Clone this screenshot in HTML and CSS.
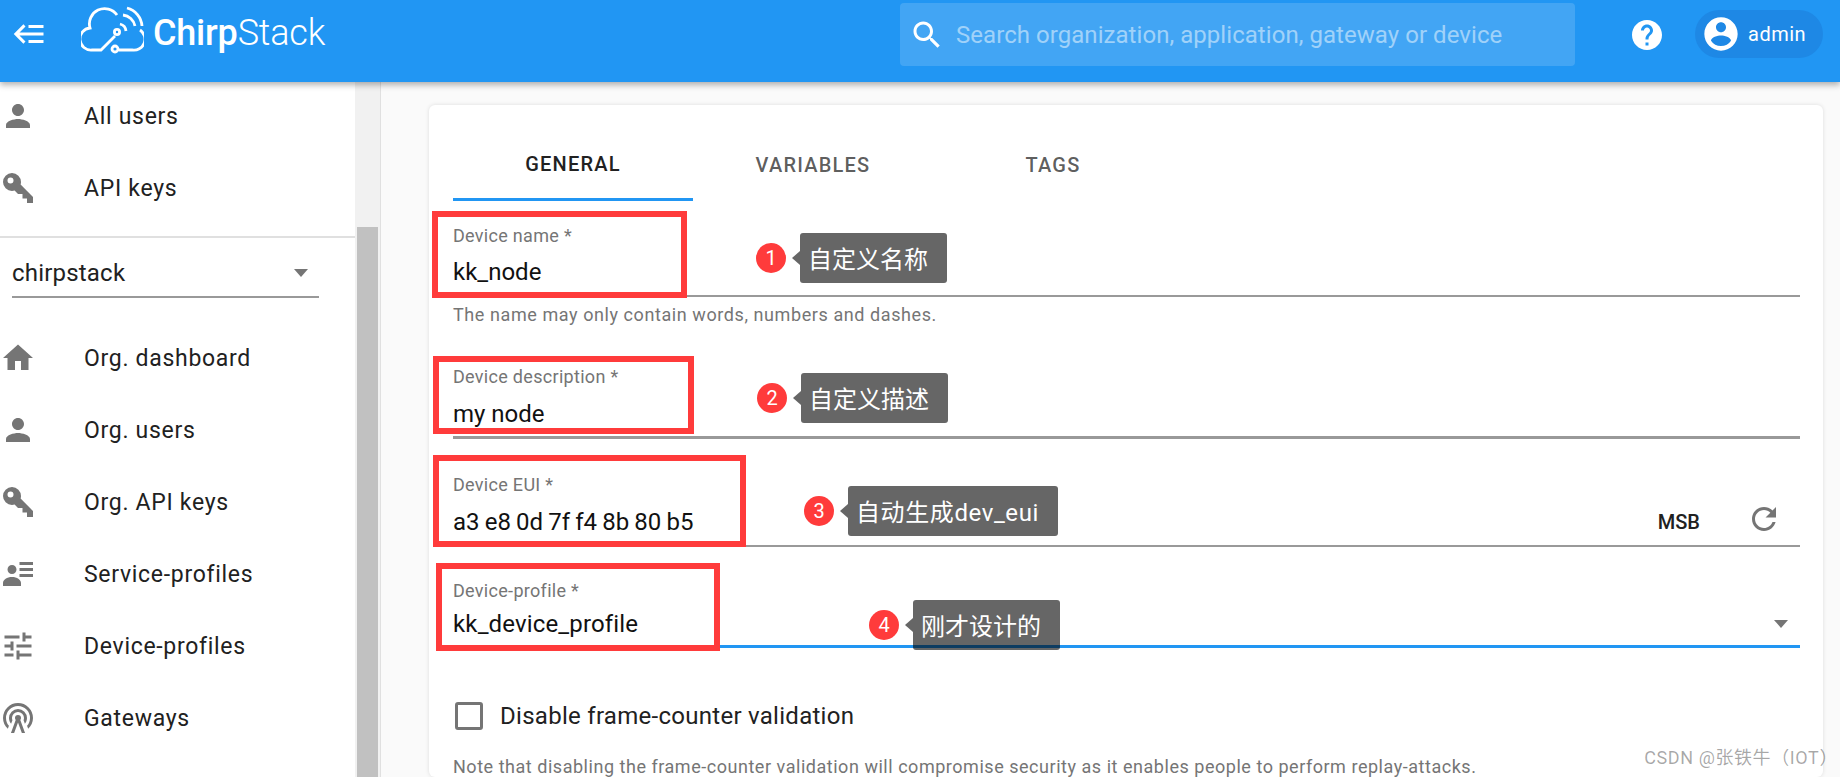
FILE: index.html
```html
<!DOCTYPE html>
<html lang="en">
  <head>
    <meta charset="UTF-8" />
    <meta name="viewport" content="width=device-width, initial-scale=1.0" />
    <title>ChirpStack</title>
    <link rel="stylesheet" href="styles.css">
  </head>
  <body>
    <header class="topbar">
      <svg class="menu-icon" viewBox="0 0 24 24"><path d="M5,13L9,17L7.6,18.42L1.18,12L7.6,5.58L9,7L5,11H21V13H5M21,6V8H11V6H21M21,16V18H11V16H21Z"/></svg>
      <svg class="logo-icon" viewBox="81 6 63 48">
        <path d="M115 36 L101 50 H92 A11 11 0 0 1 90 28 A15.2 15.2 0 0 1 117 15"/>
        <path d="M140 30 A11 11 0 0 1 132 50 H119"/>
        <circle cx="117" cy="32" r="2.6"/>
        <circle cx="115" cy="49" r="3"/>
        <path d="M120 24 A8 8 0 0 1 126 31"/>
        <path d="M123 15 A14 14 0 0 1 135 26"/>
        <path d="M127 8 A20 20 0 0 1 142 26"/>
      </svg>
      <div class="logo-text"><b>Chirp</b>Stack</div>
      <div class="search">
        <svg class="search-icon" viewBox="0 0 24 24"><path d="M15.5 14h-.79l-.28-.27C15.41 12.59 16 11.11 16 9.5 16 5.91 13.09 3 9.5 3S3 5.91 3 9.5 5.91 16 9.5 16c1.61 0 3.09-.59 4.23-1.57l.27.28v.79l5 4.99L20.49 19l-4.99-5zm-6 0C7.01 14 5 11.99 5 9.5S7.01 5 9.5 5 14 7.01 14 9.5 11.99 14 9.5 14z"/></svg>
        <span>Search organization, application, gateway or device</span>
      </div>
      <svg class="help-icon" viewBox="0 0 24 24"><path d="M12 2C6.48 2 2 6.48 2 12s4.48 10 10 10 10-4.48 10-10S17.52 2 12 2zm1 17h-2v-2h2v2zm2.07-7.75l-.9.92C13.45 12.9 13 13.5 13 15h-2v-.5c0-1.1.45-2.1 1.17-2.83l1.24-1.26c.37-.36.59-.86.59-1.41 0-1.1-.9-2-2-2s-2 .9-2 2H8c0-2.21 1.79-4 4-4s4 1.79 4 4c0 .88-.36 1.68-.93 2.25z"/></svg>
      <div class="user-chip">
        <svg viewBox="0 0 24 24"><path d="M12 2C6.48 2 2 6.48 2 12s4.48 10 10 10 10-4.48 10-10S17.52 2 12 2zm0 3c1.66 0 3 1.34 3 3s-1.34 3-3 3-3-1.34-3-3 1.34-3 3-3zm0 14.2c-2.5 0-4.71-1.28-6-3.22.03-1.99 4-3.08 6-3.08 1.99 0 5.97 1.09 6 3.08-1.29 1.94-3.5 3.22-6 3.22z"/></svg>
        <span>admin</span>
      </div>
    </header>

    <div class="layout">
      <aside class="sidebar">
        <nav class="nav">
          <a class="nav-item">
            <svg viewBox="0 0 24 24"><path d="M12 12c2.21 0 4-1.79 4-4s-1.79-4-4-4-4 1.79-4 4 1.79 4 4 4zm0 2c-2.67 0-8 1.34-8 4v2h16v-2c0-2.66-5.33-4-8-4z"/></svg>
            All users
          </a>
          <a class="nav-item">
            <svg viewBox="0 0 24 24"><path d="M22,18V22H18V19H15V16H12L9.74,13.74C9.19,13.91 8.61,14 8,14A6,6 0 0,1 2,8A6,6 0 0,1 8,2A6,6 0 0,1 14,8C14,8.61 13.91,9.19 13.74,9.74L22,18M7,5A2,2 0 0,0 5,7A2,2 0 0,0 7,9A2,2 0 0,0 9,7A2,2 0 0,0 7,5Z"/></svg>
            API keys
          </a>
          <div class="org-select">
            <span>chirpstack</span>
            <i class="caret"></i>
          </div>
          <a class="nav-item">
            <svg viewBox="0 0 24 24"><path d="M10 20v-6h4v6h5v-8h3L12 3 2 12h3v8z"/></svg>
            Org. dashboard
          </a>
          <a class="nav-item">
            <svg viewBox="0 0 24 24"><path d="M12 12c2.21 0 4-1.79 4-4s-1.79-4-4-4-4 1.79-4 4 1.79 4 4 4zm0 2c-2.67 0-8 1.34-8 4v2h16v-2c0-2.66-5.33-4-8-4z"/></svg>
            Org. users
          </a>
          <a class="nav-item">
            <svg viewBox="0 0 24 24"><path d="M22,18V22H18V19H15V16H12L9.74,13.74C9.19,13.91 8.61,14 8,14A6,6 0 0,1 2,8A6,6 0 0,1 8,2A6,6 0 0,1 14,8C14,8.61 13.91,9.19 13.74,9.74L22,18M7,5A2,2 0 0,0 5,7A2,2 0 0,0 7,9A2,2 0 0,0 9,7A2,2 0 0,0 7,5Z"/></svg>
            Org. API keys
          </a>
          <a class="nav-item">
            <svg viewBox="0 0 24 24"><path d="M11,9C11,10.66 9.66,12 8,12C6.34,12 5,10.66 5,9C5,7.34 6.34,6 8,6C9.66,6 11,7.34 11,9M14,20H2V18C2,15.79 4.69,14 8,14C11.31,14 14,15.79 14,18M22,12V14H13V12M22,8V10H13V8M22,4V6H13V4Z"/></svg>
            Service-profiles
          </a>
          <a class="nav-item">
            <svg viewBox="0 0 24 24"><path d="M3 17v2h6v-2H3zM3 5v2h10V5H3zm10 16v-2h8v-2h-8v-2h-2v6h2zM7 9v2H3v2h4v2h2V9H7zm14 4v-2H11v2h10zm-6-4h2V7h4V5h-4V3h-2v6z"/></svg>
            Device-profiles
          </a>
          <a class="nav-item">
            <svg viewBox="0 0 24 24"><path d="M12,10A2,2 0 0,1 14,12C14,12.5 13.82,12.94 13.53,13.29L16.7,22H14.57L12,14.93L9.43,22H7.3L10.47,13.29C10.18,12.94 10,12.5 10,12A2,2 0 0,1 12,10M12,8A4,4 0 0,0 8,12C8,12.5 8.1,13 8.28,13.46L7.4,15.86C6.53,14.81 6,13.47 6,12A6,6 0 0,1 12,6A6,6 0 0,1 18,12C18,13.47 17.47,14.81 16.6,15.86L15.72,13.46C15.9,13 16,12.5 16,12A4,4 0 0,0 12,8M12,4A8,8 0 0,0 4,12C4,14 4.73,15.82 5.95,17.22L5.23,19.2C3.24,17.37 2,14.83 2,12A10,10 0 0,1 12,2A10,10 0 0,1 22,12C22,14.83 20.76,17.37 18.77,19.2L18.05,17.22C19.27,15.82 20,14 20,12A8,8 0 0,0 12,4Z"/></svg>
            Gateways
          </a>
        </nav>
        <div class="scrollbar"><div class="scrollbar-thumb"></div></div>
      </aside>

      <main class="content">
        <section class="card">
          <div class="tabs">
            <div class="tab active">General</div>
            <div class="tab">Variables</div>
            <div class="tab">Tags</div>
          </div>

          <div class="field field-name">
            <label>Device name *</label>
            <div class="value">kk_node</div>
          </div>
          <p class="helper">The name may only contain words, numbers and dashes.</p>

          <div class="field field-desc">
            <label>Device description *</label>
            <div class="value">my node</div>
          </div>

          <div class="field field-eui">
            <label>Device EUI *</label>
            <div class="value-row">
              <div class="value">a3 e8 0d 7f f4 8b 80 b5</div>
              <div class="eui-tools">
                <span class="msb">MSB</span>
                <svg viewBox="0 0 24 24"><path d="M17.65 6.35C16.2 4.9 14.21 4 12 4c-4.42 0-7.99 3.58-7.99 8s3.57 8 7.99 8c3.73 0 6.84-2.55 7.73-6h-2.08c-.82 2.33-3.04 4-5.65 4-3.31 0-6-2.69-6-6s2.69-6 6-6c1.66 0 3.14.69 4.22 1.78L13 11h7V4l-2.35 2.35z"/></svg>
              </div>
            </div>
          </div>

          <div class="field field-profile">
            <label>Device-profile *</label>
            <div class="value-row">
              <div class="value">kk_device_profile</div>
              <i class="caret"></i>
            </div>
          </div>

          <div class="check-row">
            <span class="checkbox"></span>
            Disable frame-counter validation
          </div>
          <p class="helper note">Note that disabling the frame-counter validation will compromise security as it enables people to perform replay-attacks.</p>
        </section>
      </main>
    </div>

    <!-- red boxes and callouts drawn on top of the screenshot -->
    <div class="mark mark-1"></div>
    <div class="mark mark-2"></div>
    <div class="mark mark-3"></div>
    <div class="mark mark-4"></div>

    <div class="callout callout-1"><span class="num">1</span><span class="bubble">自定义名称</span></div>
    <div class="callout callout-2"><span class="num">2</span><span class="bubble">自定义描述</span></div>
    <div class="callout callout-3"><span class="num">3</span><span class="bubble bubble-wide">自动生成dev_eui</span></div>
    <div class="callout callout-4"><span class="num">4</span><span class="bubble">刚才设计的</span></div>

    <div class="watermark">CSDN @张铁牛（IOT）</div>
  </body>
</html>
```

FILE: styles.css
```css
html, body {
  height: 100%;
}
body {
  margin: 0;
  font-family: Roboto, "Noto Sans CJK SC", sans-serif;
  color: #212121;
  background-color: #fafafa;
  overflow: hidden;
  position: relative;
}
svg {
  display: block;
  fill: currentColor;
  flex-shrink: 0;
}
p {
  margin: 0;
}

/* top bar */
.topbar {
  height: 82px;
  background-color: #2196f3;
  color: #fff;
  display: flex;
  align-items: flex-start;
  position: relative;
  z-index: 2;
  box-shadow: 0 3px 6px rgba(0, 0, 0, 0.3);
}
.menu-icon {
  width: 36px;
  height: 36px;
  margin: 16px 0 0 12px;
}
.logo-icon {
  width: 63px;
  height: 48px;
  margin: 6px 0 0 33px;
  fill: none;
  stroke: #fff;
  stroke-width: 2.8;
}
.logo-text {
  font-size: 36px;
  line-height: 40px;
  font-weight: 300;
  margin: 13px 0 0 9px;
  width: 167px;
  letter-spacing: -0.2px;
  white-space: nowrap;
}
.logo-text b {
  font-weight: 500;
}
.search {
  width: 675px;
  height: 63px;
  margin: 3px 0 0 580px;
  background-color: rgba(255, 255, 255, 0.15);
  border-radius: 4px;
  display: flex;
  align-items: center;
  padding-left: 9px;
  box-sizing: border-box;
  font-size: 24px;
  letter-spacing: 0.05px;
  color: rgba(255, 255, 255, 0.5);
}
.search-icon {
  width: 36px;
  height: 36px;
  color: #fff;
  margin-right: 11px;
}
.help-icon {
  width: 36px;
  height: 36px;
  margin: 17px 0 0 54px;
}
.user-chip {
  width: 128px;
  height: 48px;
  margin: 10px 0 0 30px;
  background-color: #1e88e5;
  border-radius: 24px;
  display: flex;
  align-items: center;
  padding-left: 6px;
  box-sizing: border-box;
  font-size: 20px;
  letter-spacing: 0.5px;
}
.user-chip svg {
  width: 40px;
  height: 40px;
  margin-right: 7px;
}

/* sidebar */
.layout {
  display: flex;
  height: calc(100% - 82px);
}
.sidebar {
  width: 381px;
  display: flex;
  flex-shrink: 0;
  border-right: 1px solid #e0e0e0;
  box-sizing: border-box;
  background-color: #f1f1f1;
}
.nav {
  width: 355px;
  background-color: #fff;
}
.nav-item {
  height: 72px;
  display: flex;
  align-items: center;
  font-size: 23px;
  letter-spacing: 0.7px;
}
.nav-item:first-child {
  margin-top: -2px;
}
.nav-item svg {
  width: 36px;
  height: 36px;
  margin-right: 48px;
  color: #757575;
}
.org-select {
  display: flex;
  height: 60px;
  margin-top: 12px;
  margin-bottom: 24px;
  border-top: 2px solid #e0e0e0;
  font-size: 24px;
  position: relative;
}
.org-select span {
  display: flex;
  align-items: center;
  width: 307px;
  margin-left: 12px;
  padding-top: 12px;
  border-bottom: 2px solid #999;
  box-sizing: border-box;
  letter-spacing: 0.2px;
}
.caret {
  display: block;
  width: 0;
  height: 0;
  border-left: 7px solid transparent;
  border-right: 7px solid transparent;
  border-top: 8px solid #757575;
}
.org-select .caret {
  position: absolute;
  left: 294px;
  top: 31px;
}
.scrollbar {
  flex: 1;
  padding: 145px 2px 0;
}
.scrollbar-thumb {
  height: 100%;
  background-color: #c1c1c1;
}

/* content card */
.content {
  flex: 1;
  padding: 23px 17px 0 48px;
}
.card {
  background-color: #fff;
  border-radius: 6px;
  box-shadow: 0 0 4px rgba(0, 0, 0, 0.12);
  padding: 24px 23px 40px 24px;
  height: 100%;
  box-sizing: border-box;
}
.tabs {
  display: flex;
  height: 72px;
}
.tab {
  width: 240px;
  display: flex;
  align-items: center;
  justify-content: center;
  box-sizing: border-box;
  font-size: 20px;
  font-weight: 500;
  letter-spacing: 1.2px;
  text-transform: uppercase;
  color: rgba(0, 0, 0, 0.65);
}
.tab.active {
  color: #212121;
  border-bottom: 3px solid #2196f3;
}

/* form fields */
.field {
  border-bottom: 2px solid #999;
}
.field label {
  display: block;
  font-size: 18px;
  line-height: 22px;
  letter-spacing: 0.3px;
  color: #757575;
}
.value {
  font-size: 24px;
  line-height: 30px;
  color: #111;
}
.value-row {
  display: flex;
  justify-content: space-between;
  align-items: center;
}
.field-name {
  margin-top: 24px;
  padding-bottom: 8px;
}
.field-name label {
  margin-bottom: 10px;
}
.field-desc {
  margin-top: 41px;
  padding-bottom: 7px;
  border-bottom-width: 3px;
}
.field-desc label {
  margin-bottom: 11px;
}
.field-eui {
  margin-top: 35px;
  padding-bottom: 8px;
}
.field-eui label {
  margin-bottom: 11px;
}
.field-eui .value {
  word-spacing: -0.8px;
}
.eui-tools {
  display: flex;
  align-items: center;
  font-size: 20px;
  font-weight: 500;
}
.eui-tools svg {
  width: 36px;
  height: 36px;
  margin: -6px 18px 0 46px;
  color: #757575;
}
.field-profile {
  margin-top: 33px;
  padding-bottom: 6px;
  border-bottom: 3px solid #2196f3;
}
.field-profile label {
  margin-bottom: 7px;
}
.field-profile .value {
  letter-spacing: 0.15px;
}
.field-profile .caret {
  margin: 0 12px 0 0;
}
.helper {
  font-size: 18px;
  line-height: 20px;
  color: #757575;
  margin-top: 8px;
  letter-spacing: 0.58px;
}
.check-row {
  display: flex;
  align-items: center;
  margin-top: 53px;
  height: 30px;
  font-size: 24px;
  letter-spacing: 0.28px;
}
.checkbox {
  width: 22px;
  height: 22px;
  border: 3px solid #757575;
  border-radius: 3px;
  margin: 0 17px 0 2px;
}
.note {
  margin-top: 26px;
  white-space: nowrap;
  letter-spacing: 0.53px;
}

/* annotations */
.mark {
  position: absolute;
  border: 6px solid #ff3b3b;
  box-sizing: border-box;
}
.mark-1 {
  left: 432px;
  top: 211px;
  width: 255px;
  height: 87px;
}
.mark-2 {
  left: 433px;
  top: 356px;
  width: 261px;
  height: 78px;
}
.mark-3 {
  left: 433px;
  top: 455px;
  width: 313px;
  height: 92px;
}
.mark-4 {
  left: 436px;
  top: 563px;
  width: 284px;
  height: 88px;
}
.callout {
  position: absolute;
  display: flex;
  align-items: center;
  gap: 14px;
}
.callout-1 {
  left: 756px;
  top: 233px;
}
.callout-2 {
  left: 757px;
  top: 373px;
}
.callout-3 {
  left: 804px;
  top: 486px;
}
.callout-4 {
  left: 869px;
  top: 600px;
}
.num {
  width: 30px;
  height: 30px;
  border-radius: 50%;
  background-color: #ff3b3b;
  color: #fff;
  font-size: 20px;
  display: flex;
  align-items: center;
  justify-content: center;
}
.bubble {
  height: 50px;
  padding: 0 19px 2px 8px;
  box-sizing: border-box;
  border-radius: 3px;
  background-color: rgba(0, 0, 0, 0.6);
  color: #fff;
  font-size: 24px;
  display: flex;
  align-items: center;
  position: relative;
}
.bubble-wide {
  letter-spacing: 0.6px;
}
.bubble::before {
  content: '';
  position: absolute;
  left: -8px;
  top: 18px;
  border-top: 7px solid transparent;
  border-bottom: 7px solid transparent;
  border-right: 8px solid rgba(0, 0, 0, 0.6);
}
.watermark {
  position: absolute;
  right: 2px;
  bottom: 6px;
  font-size: 18px;
  line-height: 26px;
  letter-spacing: 0.6px;
  color: rgba(0, 0, 0, 0.35);
  white-space: nowrap;
}
```
